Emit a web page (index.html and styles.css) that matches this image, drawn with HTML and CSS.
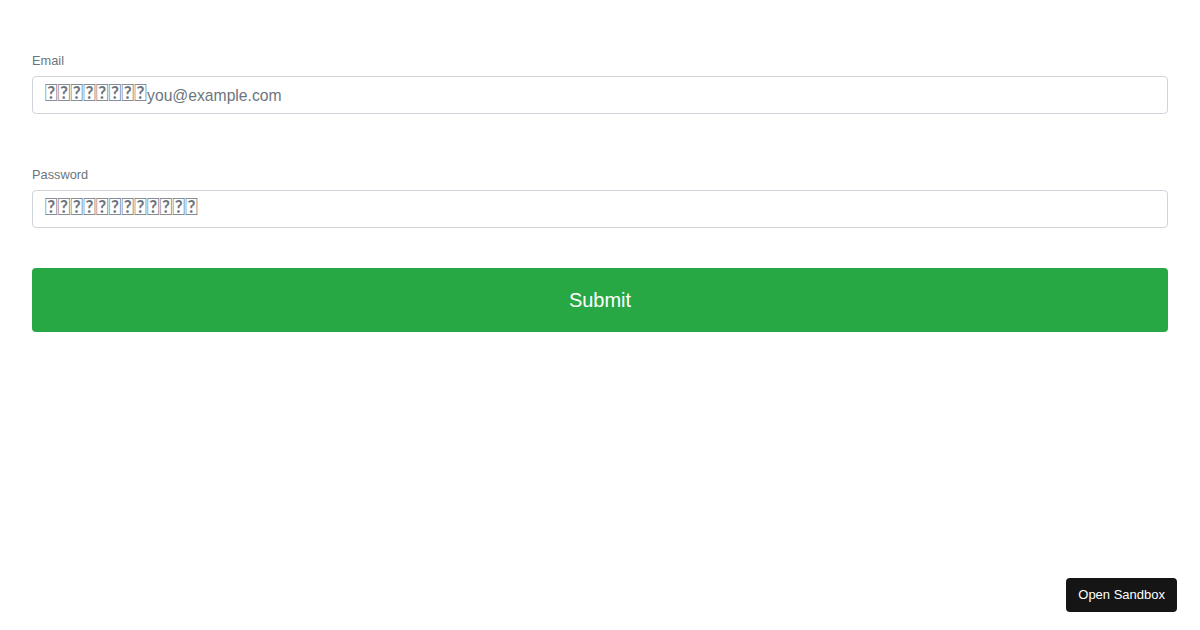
FILE: index.html
```html
<!DOCTYPE html>
<html>
<head>
<meta charset="utf-8">
<link rel="stylesheet" href="styles.css">
</head>
<body>
<form class="form">
  <div class="field">
    <label class="label" for="email">Email</label>
    <div class="control">
      <input class="input" id="email" type="email">
      <span class="ph"><span class="tofu">&#xE000;&#xE001;&#xE002;&#xE003;&#xE004;&#xE005;&#xE006;&#xE007;</span>you@example.com</span>
    </div>
  </div>
  <div class="field">
    <label class="label" for="password">Password</label>
    <div class="control">
      <input class="input" id="password" type="password">
      <span class="ph"><span class="tofu">&#xE000;&#xE001;&#xE002;&#xE003;&#xE004;&#xE005;&#xE006;&#xE007;&#xE008;&#xE009;&#xE00A;&#xE00B;</span></span>
    </div>
  </div>
  <button class="submit" type="button">Submit</button>
</form>
<a class="sandbox" href="#">Open Sandbox</a>
</body>
</html>
```

FILE: styles.css
```css
html, body {
  margin: 0;
  padding: 0;
  background: #ffffff;
  font-family: "Liberation Sans", Arial, sans-serif;
}
.form {
  display: flex;
  flex-direction: column;
  padding: 53px 32px 0;
}
.field {
  display: flex;
  flex-direction: column;
  margin-bottom: 40px;
}
.field + .field {
  margin-top: 13px;
}
.label {
  font-size: 12.8px;
  line-height: 16px;
  color: #6c757d;
  margin-bottom: 7px;
}
.control {
  position: relative;
  display: flex;
}
.input {
  flex: 1;
  box-sizing: border-box;
  height: 38px;
  border: 1px solid #ced4da;
  border-radius: 4px;
  padding: 0 12px;
  font-family: "Liberation Sans", Arial, sans-serif;
  font-size: 16px;
  color: #495057;
  outline: none;
}
.ph {
  position: absolute;
  left: 13px;
  top: 1px;
  height: 38px;
  line-height: 38px;
  font-size: 15.7px;
  color: #6c757d;
  pointer-events: none;
  white-space: nowrap;
}
.tofu {
  font-family: Lato, sans-serif;
  font-size: 24px;
  line-height: 1;
  color: #6c757d;
}
.submit {
  height: 64px;
  border: none;
  border-radius: 4px;
  background: #28a745;
  color: #ffffff;
  font-family: "Liberation Sans", Arial, sans-serif;
  font-size: 20px;
  cursor: pointer;
}
.sandbox {
  position: fixed;
  right: 23px;
  bottom: 18px;
  background: #151515;
  color: #ffffff;
  font-size: 13px;
  line-height: 34px;
  padding: 0 12px;
  border-radius: 4px;
  text-decoration: none;
}
```
